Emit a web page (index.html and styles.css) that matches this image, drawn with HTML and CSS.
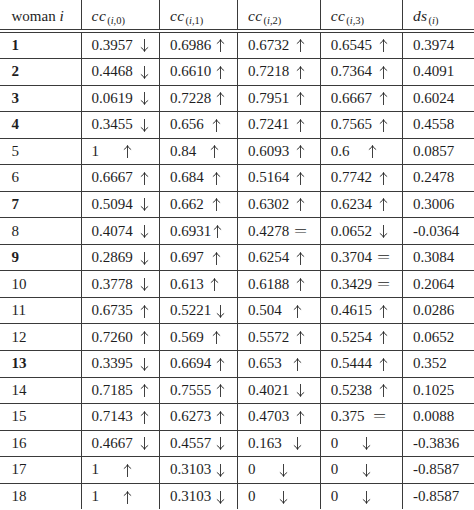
FILE: index.html
```html
<!DOCTYPE html>
<html>
<head>
<meta charset="utf-8">
<link rel="stylesheet" href="styles.css">
</head>
<body>
<svg width="0" height="0" class="defs" aria-hidden="true">
  <defs>
    <symbol id="up" viewBox="0 0 9 13">
      <path d="M4.5 12.6 V0.9 M1.2 4.4 Q3.6 3 4.5 0.6 Q5.4 3 7.8 4.4" fill="none" stroke="#1e1e1e" stroke-width="0.85" stroke-linecap="round" stroke-linejoin="round"/>
    </symbol>
    <symbol id="down" viewBox="0 0 9 13">
      <path d="M4.5 0.4 V12.1 M1.2 8.6 Q3.6 10 4.5 12.4 Q5.4 10 7.8 8.6" fill="none" stroke="#1e1e1e" stroke-width="0.85" stroke-linecap="round" stroke-linejoin="round"/>
    </symbol>
  </defs>
</svg>
<table class="t">
<colgroup>
<col class="c0"><col class="c1"><col class="c2"><col class="c3"><col class="c4"><col class="c5">
</colgroup>
<thead>
<tr class="hd">
<th>woman <i class="mi">i</i></th>
<th><i class="mi">cc</i><span class="sb">(<i>i</i>,0)</span></th>
<th><i class="mi">cc</i><span class="sb">(<i>i</i>,1)</span></th>
<th><i class="mi">cc</i><span class="sb">(<i>i</i>,2)</span></th>
<th><i class="mi">cc</i><span class="sb">(<i>i</i>,3)</span></th>
<th><i class="mi">ds</i><span class="sb">(<i>i</i>)</span></th>
</tr>
<tr class="gap"><td></td><td></td><td></td><td></td><td></td><td></td></tr>
</thead>
<tbody>
<tr><td class="b">1</td><td><span class="n n4">0.3957</span><svg class="a"><use href="#down"/></svg></td><td><span class="n n4t">0.6986</span><svg class="a"><use href="#up"/></svg></td><td><span class="n n4">0.6732</span><svg class="a"><use href="#up"/></svg></td><td><span class="n n4">0.6545</span><svg class="a"><use href="#up"/></svg></td><td>0.3974</td></tr>
<tr><td class="b">2</td><td><span class="n n4">0.4468</span><svg class="a"><use href="#down"/></svg></td><td><span class="n n4t">0.6610</span><svg class="a"><use href="#up"/></svg></td><td><span class="n n4">0.7218</span><svg class="a"><use href="#up"/></svg></td><td><span class="n n4">0.7364</span><svg class="a"><use href="#up"/></svg></td><td>0.4091</td></tr>
<tr><td class="b">3</td><td><span class="n n4">0.0619</span><svg class="a"><use href="#down"/></svg></td><td><span class="n n4t">0.7228</span><svg class="a"><use href="#up"/></svg></td><td><span class="n n4">0.7951</span><svg class="a"><use href="#up"/></svg></td><td><span class="n n4">0.6667</span><svg class="a"><use href="#up"/></svg></td><td>0.6024</td></tr>
<tr><td class="b">4</td><td><span class="n n4">0.3455</span><svg class="a"><use href="#down"/></svg></td><td><span class="n n3t">0.656</span><svg class="a"><use href="#up"/></svg></td><td><span class="n n4">0.7241</span><svg class="a"><use href="#up"/></svg></td><td><span class="n n4">0.7565</span><svg class="a"><use href="#up"/></svg></td><td>0.4558</td></tr>
<tr><td>5</td><td><span class="n n0">1</span><svg class="a"><use href="#up"/></svg></td><td><span class="n n2">0.84</span><svg class="a"><use href="#up"/></svg></td><td><span class="n n4">0.6093</span><svg class="a"><use href="#up"/></svg></td><td><span class="n n1">0.6</span><svg class="a"><use href="#up"/></svg></td><td>0.0857</td></tr>
<tr><td>6</td><td><span class="n n4">0.6667</span><svg class="a"><use href="#up"/></svg></td><td><span class="n n3t">0.684</span><svg class="a"><use href="#up"/></svg></td><td><span class="n n4">0.5164</span><svg class="a"><use href="#up"/></svg></td><td><span class="n n4">0.7742</span><svg class="a"><use href="#up"/></svg></td><td>0.2478</td></tr>
<tr><td class="b">7</td><td><span class="n n4">0.5094</span><svg class="a"><use href="#down"/></svg></td><td><span class="n n3t">0.662</span><svg class="a"><use href="#up"/></svg></td><td><span class="n n4">0.6302</span><svg class="a"><use href="#up"/></svg></td><td><span class="n n4">0.6234</span><svg class="a"><use href="#up"/></svg></td><td>0.3006</td></tr>
<tr><td>8</td><td><span class="n n4">0.4074</span><svg class="a"><use href="#down"/></svg></td><td><span class="n n4x">0.6931</span><svg class="a"><use href="#up"/></svg></td><td><span class="n n4">0.4278</span><span class="eq">=</span></td><td><span class="n n4">0.0652</span><svg class="a"><use href="#down"/></svg></td><td>-0.0364</td></tr>
<tr><td class="b">9</td><td><span class="n n4">0.2869</span><svg class="a"><use href="#down"/></svg></td><td><span class="n n3t">0.697</span><svg class="a"><use href="#up"/></svg></td><td><span class="n n4">0.6254</span><svg class="a"><use href="#up"/></svg></td><td><span class="n n4">0.3704</span><span class="eq">=</span></td><td>0.3084</td></tr>
<tr><td>10</td><td><span class="n n4">0.3778</span><svg class="a"><use href="#down"/></svg></td><td><span class="n n2">0.613</span><svg class="a"><use href="#up"/></svg></td><td><span class="n n4">0.6188</span><svg class="a"><use href="#up"/></svg></td><td><span class="n n4">0.3429</span><span class="eq">=</span></td><td>0.2064</td></tr>
<tr><td>11</td><td><span class="n n4">0.6735</span><svg class="a"><use href="#up"/></svg></td><td><span class="n n4t">0.5221</span><svg class="a"><use href="#down"/></svg></td><td><span class="n n3">0.504</span><svg class="a"><use href="#up"/></svg></td><td><span class="n n4">0.4615</span><svg class="a"><use href="#up"/></svg></td><td>0.0286</td></tr>
<tr><td>12</td><td><span class="n n4">0.7260</span><svg class="a"><use href="#up"/></svg></td><td><span class="n n3t">0.569</span><svg class="a"><use href="#up"/></svg></td><td><span class="n n4">0.5572</span><svg class="a"><use href="#up"/></svg></td><td><span class="n n4">0.5254</span><svg class="a"><use href="#up"/></svg></td><td>0.0652</td></tr>
<tr><td class="b">13</td><td><span class="n n4">0.3395</span><svg class="a"><use href="#down"/></svg></td><td><span class="n n4t">0.6694</span><svg class="a"><use href="#up"/></svg></td><td><span class="n n3">0.653</span><svg class="a"><use href="#up"/></svg></td><td><span class="n n4">0.5444</span><svg class="a"><use href="#up"/></svg></td><td>0.352</td></tr>
<tr><td>14</td><td><span class="n n4">0.7185</span><svg class="a"><use href="#up"/></svg></td><td><span class="n n4t">0.7555</span><svg class="a"><use href="#up"/></svg></td><td><span class="n n4">0.4021</span><svg class="a"><use href="#down"/></svg></td><td><span class="n n4">0.5238</span><svg class="a"><use href="#up"/></svg></td><td>0.1025</td></tr>
<tr><td>15</td><td><span class="n n4">0.7143</span><svg class="a"><use href="#up"/></svg></td><td><span class="n n4t">0.6273</span><svg class="a"><use href="#up"/></svg></td><td><span class="n n4">0.4703</span><svg class="a"><use href="#up"/></svg></td><td><span class="n n3">0.375</span><span class="eq">=</span></td><td>0.0088</td></tr>
<tr><td>16</td><td><span class="n n4">0.4667</span><svg class="a"><use href="#down"/></svg></td><td><span class="n n4t">0.4557</span><svg class="a"><use href="#down"/></svg></td><td><span class="n n3">0.163</span><svg class="a"><use href="#down"/></svg></td><td><span class="n n0">0</span><svg class="a"><use href="#down"/></svg></td><td>-0.3836</td></tr>
<tr><td>17</td><td><span class="n n0">1</span><svg class="a"><use href="#up"/></svg></td><td><span class="n n4t">0.3103</span><svg class="a"><use href="#down"/></svg></td><td><span class="n n0">0</span><svg class="a"><use href="#down"/></svg></td><td><span class="n n0">0</span><svg class="a"><use href="#down"/></svg></td><td>-0.8587</td></tr>
<tr><td>18</td><td><span class="n n0">1</span><svg class="a"><use href="#up"/></svg></td><td><span class="n n4t">0.3103</span><svg class="a"><use href="#down"/></svg></td><td><span class="n n0">0</span><svg class="a"><use href="#down"/></svg></td><td><span class="n n0">0</span><svg class="a"><use href="#down"/></svg></td><td>-0.8587</td></tr>
</tbody>
</table>
</body>
</html>
```
FILE: styles.css
```css
html, body {
  margin: 0;
  padding: 0;
  background: #ffffff;
  overflow: hidden;
}

.defs {
  position: absolute;
  width: 0;
  height: 0;
}

.t {
  border-collapse: separate;
  border-spacing: 0;
  table-layout: fixed;
  width: 490px;
  font-family: "Liberation Serif", "DejaVu Serif", serif;
  font-size: 15px;
  color: #1e1e1e;
}

.c0 { width: 80.6px; }
.c1 { width: 78.3px; }
.c2 { width: 78px; }
.c3 { width: 82.7px; }
.c4 { width: 82.3px; }
.c5 { width: 88px; }

.t th,
.t td {
  box-sizing: border-box;
  padding: 0 0 0 10px;
  text-align: left;
  white-space: nowrap;
  vertical-align: middle;
  font-weight: normal;
  line-height: 17px;
}

.t th:first-child,
.t td:first-child {
  padding-left: 11.5px;
}

.t th + th,
.t td + td {
  border-left: 1px solid #3a3a3a;
}

.t .hd th {
  height: 29.8px;
  padding-top: 3px;
  border-bottom: 1px solid #3a3a3a;
}

.t .gap td {
  height: 2.2px;
  padding: 0;
  border-left: none;
  line-height: 0;
  font-size: 0;
}

.t tbody td {
  height: 26.55px;
  border-top: 1px solid #3a3a3a;
}

.t tbody tr:first-child td {
  height: 26px;
}

.t td.b {
  font-weight: bold;
}

.mi {
  font-style: italic;
  font-size: 15.5px;
  letter-spacing: 0.4px;
}

.sb {
  font-size: 10.5px;
  position: relative;
  top: 3.5px;
  margin-left: 1px;
  line-height: 0;
}

.sb i {
  font-style: italic;
}

.n {
  display: inline-block;
}

.n4 { width: 48.4px; }
.n4t { width: 46px; }
.n4x { width: 43.2px; }
.n3 { width: 45.2px; }
.n3t { width: 42.2px; }
.n2 { width: 40px; }
.n1 { width: 37.8px; }
.n0 { width: 31px; }

.a {
  display: inline-block;
  width: 9px;
  height: 13px;
  vertical-align: -2.5px;
}

.eq {
  display: inline-block;
  width: 9px;
  margin-left: -0.5px;
  text-align: center;
  transform: scaleX(1.55);
}
```
